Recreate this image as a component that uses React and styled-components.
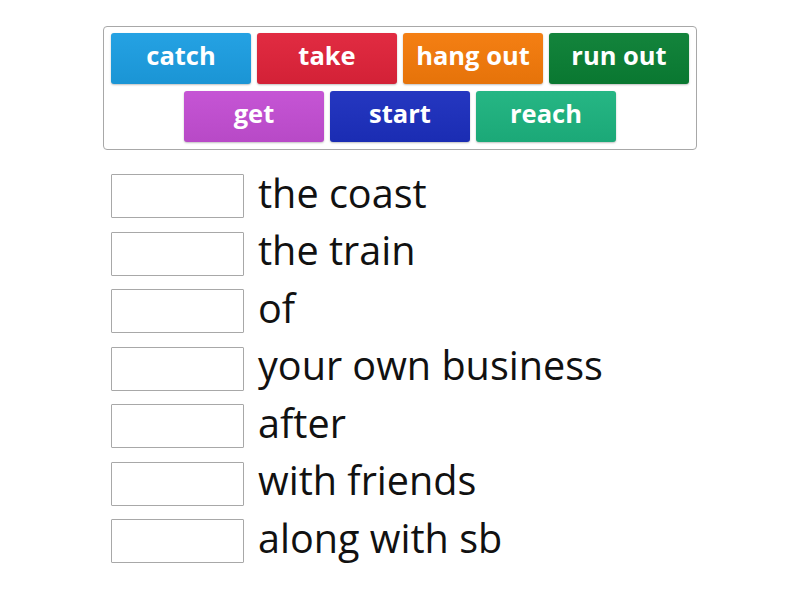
import styled, { createGlobalStyle } from 'styled-components';

const GlobalStyle = createGlobalStyle`
  html, body {
    margin: 0;
    padding: 0;
    background: #ffffff;
  }
  body {
    font-family: "Open Sans", "Liberation Sans", sans-serif;
  }
`;

const Page = styled.div`
  width: 800px;
  height: 600px;
  padding-top: 26px;
  box-sizing: border-box;
`;

const Bank = styled.div`
  margin-left: 103px;
  width: 594px;
  box-sizing: border-box;
  border: 1px solid #a8a8a8;
  border-radius: 4px;
  padding: 6px 7px 7px;
  display: flex;
  flex-wrap: wrap;
  justify-content: center;
  gap: 7px 6px;
`;

const Tile = styled.div`
  width: 140px;
  height: 51px;
  border-radius: 3px;
  background: ${p => p.color};
  background-image: linear-gradient(to bottom, rgba(255,255,255,0.04), rgba(0,0,0,0.06));
  box-shadow: 0 1px 2px rgba(0,0,0,0.25);
  color: #ffffff;
  font-family: "Open Sans", sans-serif;
  font-weight: 700;
  font-size: 25.5px;
  display: flex;
  align-items: center;
  justify-content: center;
  padding-bottom: 8px;
  box-sizing: border-box;
`;

const Rows = styled.div`
  margin-top: 24px;
  margin-left: 111px;
  display: flex;
  flex-direction: column;
  gap: 13.5px;
`;

const Row = styled.div`
  display: flex;
  align-items: center;
  height: 44px;
`;

const Slot = styled.div`
  width: 133px;
  height: 44px;
  box-sizing: border-box;
  border: 1px solid #a8a8a8;
  border-radius: 1px;
  background: #fff;
  flex-shrink: 0;
`;

const Phrase = styled.div`
  margin-left: 14px;
  font-family: "Open Sans", sans-serif;
  font-size: 39.6px;
  color: #111;
  line-height: 44px;
  white-space: nowrap;
  padding-bottom: 7px;
`;

const tiles = [
  { label: 'catch', color: '#1c9ee2' },
  { label: 'take', color: '#e0233a' },
  { label: 'hang out', color: '#f47a0a' },
  { label: 'run out', color: '#0a7f34' },
  { label: 'get', color: '#c34ed3' },
  { label: 'start', color: '#1c2fbe' },
  { label: 'reach', color: '#1db37f' },
];

const phrases = [
  'the coast',
  'the train',
  'of',
  'your own business',
  'after',
  'with friends',
  'along with sb',
];

export default function App() {
  return (
    <Page>
      <GlobalStyle />
      <Bank>
        {tiles.map(t => (
          <Tile key={t.label} color={t.color}>{t.label}</Tile>
        ))}
      </Bank>
      <Rows>
        {phrases.map(p => (
          <Row key={p}>
            <Slot />
            <Phrase>{p}</Phrase>
          </Row>
        ))}
      </Rows>
    </Page>
  );
}
